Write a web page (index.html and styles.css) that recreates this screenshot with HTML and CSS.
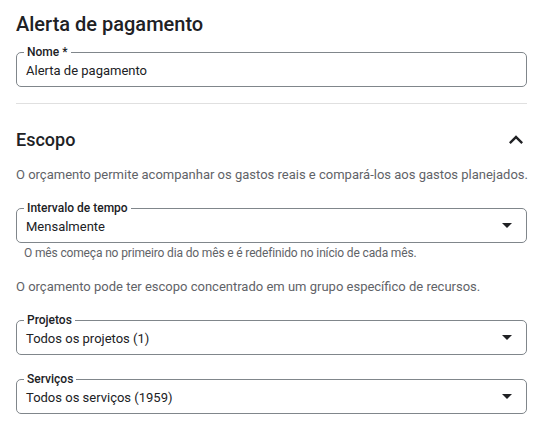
FILE: index.html
```html
<!DOCTYPE html>
<html lang="pt">
<head>
<meta charset="utf-8">
<link rel="stylesheet" href="styles.css">
</head>
<body>
<main class="page">
  <h1 class="title">Alerta de pagamento</h1>
  <div class="field field-name">
    <span class="field-label">Nome *</span>
    <span class="field-value">Alerta de pagamento</span>
  </div>
  <hr class="divider">
  <div class="section-head">
    <h2 class="section-title">Escopo</h2>
    <svg class="chevron" width="28" height="28" viewBox="0 0 24 24"><path d="M7.41 15.41L12 10.83l4.59 4.58L18 14l-6-6-6 6z" fill="#202124"/></svg>
  </div>
  <p class="desc">O orçamento permite acompanhar os gastos reais e compará-los aos gastos planejados.</p>
  <div class="field field-select field-interval">
    <span class="field-label">Intervalo de tempo</span>
    <span class="field-value">Mensalmente</span>
    <span class="arrow"></span>
  </div>
  <p class="hint">O mês começa no primeiro dia do mês e é redefinido no início de cada mês.</p>
  <p class="desc desc-2">O orçamento pode ter escopo concentrado em um grupo específico de recursos.</p>
  <div class="field field-select field-projects">
    <span class="field-label">Projetos</span>
    <span class="field-value">Todos os projetos (1)</span>
    <span class="arrow"></span>
  </div>
  <div class="field field-select field-services">
    <span class="field-label">Serviços</span>
    <span class="field-value">Todos os serviços (1959)</span>
    <span class="arrow"></span>
  </div>
</main>
</body>
</html>
```

FILE: styles.css
```css
* { box-sizing: border-box; }
html, body { margin: 0; padding: 0; background: #fff; }
body {
  font-family: Roboto, "Liberation Sans", Arial, sans-serif;
  color: #202124;
}
.page {
  width: 546px;
  padding: 0 19px 0 16px;
}
.title {
  margin: 0;
  padding-top: 12px;
  font-size: 20px;
  line-height: 24px;
  font-weight: 500;
}
.field {
  position: relative;
  display: flex;
  align-items: center;
  height: 35px;
  border: 1px solid #80868b;
  border-radius: 5px;
  padding: 0 10px 0 9px;
}
.field-name { margin-top: 16px; }
.field-label {
  position: absolute;
  top: -9px;
  left: 7px;
  padding: 0 3px 0 3px;
  background: #fff;
  font-size: 12px;
  line-height: 16px;
  font-weight: 500;
  color: #202124;
}
.field-value {
  flex: 1;
  font-size: 13px;
  line-height: 20px;
  padding-top: 2px;
  color: #202124;
}
.arrow {
  width: 0;
  height: 0;
  border-left: 5px solid transparent;
  border-right: 5px solid transparent;
  border-top: 5px solid #202124;
  margin-right: 4px;
}
.divider {
  margin: 16px 0 0 0;
  border: 0;
  border-top: 1px solid #e0e0e0;
  height: 0;
}
.section-head {
  display: flex;
  align-items: center;
  justify-content: space-between;
  margin-top: 23px;
  height: 26px;
}
.section-title {
  margin: 0;
  font-size: 18px;
  line-height: 26px;
  font-weight: 500;
}
.chevron { margin-right: -3px; }
.desc {
  margin: 12px 0 0 0;
  font-size: 13px;
  line-height: 20px;
  color: #5f6368;
  white-space: nowrap;
}
.field-interval { margin-top: 23px; }
.hint {
  margin: 2px 0 0 8px;
  font-size: 12px;
  line-height: 16px;
  color: #5f6368;
  letter-spacing: -0.15px;
}
.desc-2 { margin-top: 16px; }
.field-projects { margin-top: 23px; }
.field-services { margin-top: 24px; }
```
